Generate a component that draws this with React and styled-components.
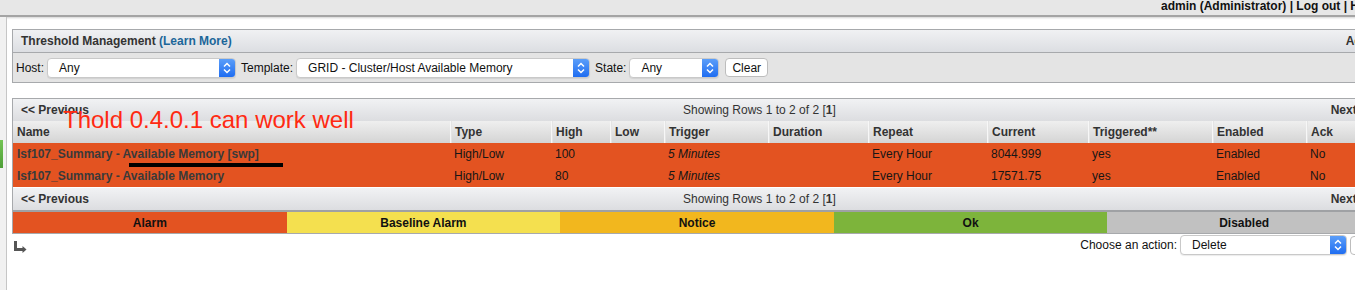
import React from "react";
import styled, { createGlobalStyle } from "styled-components";

const GlobalStyle = createGlobalStyle`
    html, body {
        margin: 0;
        padding: 0;
        overflow: hidden;
        background: #ffffff;
    }
    body {
        font-family: "Liberation Sans", Arial, Helvetica, sans-serif;
        font-size: 12px;
        color: #1a1a1a;
    }
`;

const COLS = "437px 101px 59px 54px 104px 100px 119px 101px 124px 94px 75px";

const Page = styled.div`
    width: 1400px;
    height: 100vh;
    display: flex;
    flex-direction: column;
`;

const TopBar = styled.div`
    height: 15px;
    background: #e7e7e7;
    border-bottom: 2px solid #a4a4a4;
    box-shadow: 0 1px 2px rgba(0, 0, 0, 0.18);
    display: flex;
    align-items: flex-start;
    padding-left: 1161px;
    font-weight: bold;
    line-height: 13px;
    color: #111;
    white-space: nowrap;
`;

const Body = styled.div`
    flex: 1;
    display: flex;
`;

const Sidebar = styled.div`
    width: 6px;
    background: #f1f1f1;
    border-right: 1px solid #c6c6c6;
`;

const GreenTab = styled.div`
    margin-top: 123px;
    width: 3px;
    height: 28px;
    background: linear-gradient(180deg, #74c454 0%, #4f9f38 100%);
`;

const Main = styled.div`
    padding: 12px 0 0 5px;
    display: flex;
    flex-direction: column;
`;

const Panel = styled.div`
    position: relative;
    width: 1368px;
    border: 1px solid #a7a9ac;
    margin-bottom: ${({ $gap }) => $gap || 0}px;
`;

const PanelHeader = styled.div`
    height: 22px;
    display: flex;
    align-items: center;
    justify-content: space-between;
    padding: 0 12px 0 8px;
    background: linear-gradient(180deg, #f0f1f3 0%, #dcdee2 100%);
    border-bottom: 1px solid #a7a9ac;
    font-weight: bold;
    color: #333;
`;

const LearnMore = styled.span`
    color: #1c6699;
`;

const FilterRow = styled.div`
    height: 29px;
    display: flex;
    align-items: center;
    gap: 3px;
    padding-left: 3px;
    background: #e4e4e4;
    color: #111;
`;

const Label = styled.span`
    margin-left: ${({ $ml }) => $ml || 0}px;
`;

const SelectBox = styled.div`
    width: ${({ $w }) => $w}px;
    height: 20px;
    box-sizing: border-box;
    display: flex;
    align-items: stretch;
    background: #ffffff;
    border: 1px solid #c9c9c9;
    border-radius: 4px;
    box-shadow: 0 1px 1px rgba(0, 0, 0, 0.08);
    overflow: hidden;
`;

const SelectText = styled.span`
    flex: 1;
    display: flex;
    align-items: center;
    padding-left: 11px;
    color: #111;
    white-space: nowrap;
`;

const SelectArrow = styled.span`
    width: 16px;
    display: flex;
    align-items: center;
    justify-content: center;
    background: linear-gradient(180deg, #5b9ef9 0%, #1f6df1 100%);
`;

const Button = styled.div`
    height: 19px;
    box-sizing: border-box;
    display: flex;
    align-items: center;
    padding: 0 6px;
    margin-left: ${({ $ml }) => $ml || 0}px;
    background: #ffffff;
    border: 1px solid #bdbdbd;
    border-radius: 4px;
    color: #111;
    width: ${({ $w }) => ($w ? `${$w}px` : "auto")};
`;

const NavRow = styled.div`
    height: 22px;
    display: grid;
    grid-template-columns: 670px auto 1fr;
    align-items: center;
    background: linear-gradient(180deg, #f1f2f4 0%, #dcdde0 100%);
    color: #333;
`;

const NavLink = styled.span`
    font-weight: bold;
    padding: 0 ${({ $right }) => ($right ? "7px" : "0")} 0
        ${({ $right }) => ($right ? "0" : "8px")};
    text-align: ${({ $right }) => ($right ? "right" : "left")};
`;

const NavCenter = styled.span`
    color: #333;
`;

const GridRow = styled.div`
    display: grid;
    grid-template-columns: ${COLS};
    height: 22px;
    align-items: stretch;
    background: ${({ $bg }) => $bg};
`;

const HeadRow = styled(GridRow)`
    background: linear-gradient(180deg, #efefef 0%, #d4d4d4 100%);
`;

const HeadCell = styled.div`
    display: flex;
    align-items: center;
    padding: 0 4px;
    font-weight: bold;
    color: #333;
    border-left: ${({ $first }) => ($first ? "none" : "1px solid #f7f7f7")};
    box-shadow: ${({ $first }) => ($first ? "none" : "inset 1px 0 0 #e4e4e4")};
`;

const Cell = styled.div`
    display: flex;
    align-items: center;
    padding: 0 4px;
    white-space: nowrap;
    font-weight: ${({ $bold }) => ($bold ? "bold" : "normal")};
    font-style: ${({ $italic }) => ($italic ? "italic" : "normal")};
    color: ${({ $bold }) => ($bold ? "#3a3a3a" : "#161616")};
`;

const BottomNav = styled.div`
    padding-top: 1px;
`;

const Legend = styled.div`
    display: grid;
    grid-template-columns: repeat(5, 1fr);
    height: 21px;
    border-top: 2px solid #9fa1a4;
`;

const LegendCell = styled.div`
    display: flex;
    align-items: center;
    justify-content: center;
    font-weight: bold;
    color: #111;
    background: ${({ $bg }) => $bg};
`;

const Note = styled.div`
    position: absolute;
    left: 50px;
    top: 9px;
    font-size: 24px;
    line-height: 24px;
    color: #ff2a12;
    white-space: nowrap;
    pointer-events: none;
`;

const Underline = styled.div`
    position: absolute;
    left: 116px;
    top: 64px;
    width: 154px;
    height: 4px;
    background: #000;
`;

const ActionRow = styled.div`
    width: 1370px;
    display: flex;
    justify-content: space-between;
    align-items: flex-start;
    padding-top: 1px;
`;

const CornerArrow = styled.svg`
    margin: 6px 0 0 2px;
`;

const ActionGroup = styled.div`
    display: flex;
    align-items: center;
    gap: 3px;
    color: #111;
`;

const Chevrons = () => (
    <svg width="10" height="14" viewBox="0 0 10 14">
        <path d="M2 5.5 L5 2.5 L8 5.5" fill="none" stroke="#fff" strokeWidth="1.5" />
        <path d="M2 8.5 L5 11.5 L8 8.5" fill="none" stroke="#fff" strokeWidth="1.5" />
    </svg>
);

const Select = ({ width, value }) => (
    <SelectBox $w={width}>
        <SelectText>{value}</SelectText>
        <SelectArrow>
            <Chevrons />
        </SelectArrow>
    </SelectBox>
);

const columns = [
    { key: "name", label: "Name" },
    { key: "type", label: "Type" },
    { key: "high", label: "High" },
    { key: "low", label: "Low" },
    { key: "trigger", label: "Trigger" },
    { key: "duration", label: "Duration" },
    { key: "repeat", label: "Repeat" },
    { key: "current", label: "Current" },
    { key: "triggered", label: "Triggered**" },
    { key: "enabled", label: "Enabled" },
    { key: "ack", label: "Ack" },
];

const rows = [
    {
        name: "lsf107_Summary - Available Memory [swp]",
        type: "High/Low",
        high: "100",
        low: "",
        trigger: "5 Minutes",
        duration: "",
        repeat: "Every Hour",
        current: "8044.999",
        triggered: "yes",
        enabled: "Enabled",
        ack: "No",
    },
    {
        name: "lsf107_Summary - Available Memory",
        type: "High/Low",
        high: "80",
        low: "",
        trigger: "5 Minutes",
        duration: "",
        repeat: "Every Hour",
        current: "17571.75",
        triggered: "yes",
        enabled: "Enabled",
        ack: "No",
    },
];

const legend = [
    { label: "Alarm", color: "#e35321" },
    { label: "Baseline Alarm", color: "#f4e04f" },
    { label: "Notice", color: "#f2b71e" },
    { label: "Ok", color: "#7db43b" },
    { label: "Disabled", color: "#c1c1c1" },
];

function Navigation() {
    return (
        <NavRow>
            <NavLink>&lt;&lt; Previous</NavLink>
            <NavCenter>
                Showing Rows 1 to 2 of 2 [<b>1</b>]
            </NavCenter>
            <NavLink $right>Next &gt;&gt;</NavLink>
        </NavRow>
    );
}

export default function App() {
    return (
        <>
            <GlobalStyle />
            <Page>
                <TopBar>admin (Administrator) | Log out | Help</TopBar>
                <Body>
                    <Sidebar>
                        <GreenTab />
                    </Sidebar>
                    <Main>
                        <Panel $gap={15}>
                            <PanelHeader>
                                <span>
                                    Threshold Management <LearnMore>(Learn More)</LearnMore>
                                </span>
                                <span>Add</span>
                            </PanelHeader>
                            <FilterRow>
                                <Label>Host:</Label>
                                <Select width={189} value="Any" />
                                <Label $ml={2}>Template:</Label>
                                <Select width={294} value="GRID - Cluster/Host Available Memory" />
                                <Label $ml={2}>State:</Label>
                                <Select width={90} value="Any" />
                                <Button $ml={3}>Clear</Button>
                            </FilterRow>
                        </Panel>

                        <Panel>
                            <Navigation />
                            <HeadRow>
                                {columns.map((c, i) => (
                                    <HeadCell key={c.key} $first={i === 0}>
                                        {c.label}
                                    </HeadCell>
                                ))}
                            </HeadRow>
                            {rows.map((r) => (
                                <GridRow key={r.name} $bg="#e35321">
                                    {columns.map((c) => (
                                        <Cell
                                            key={c.key}
                                            $bold={c.key === "name"}
                                            $italic={c.key === "trigger"}
                                        >
                                            {r[c.key]}
                                        </Cell>
                                    ))}
                                </GridRow>
                            ))}
                            <BottomNav>
                                <Navigation />
                            </BottomNav>
                            <Legend>
                                {legend.map((l) => (
                                    <LegendCell key={l.label} $bg={l.color}>
                                        {l.label}
                                    </LegendCell>
                                ))}
                            </Legend>
                            <Note>Thold 0.4.0.1 can work well</Note>
                            <Underline />
                        </Panel>

                        <ActionRow>
                            <CornerArrow width="13" height="12" viewBox="0 0 13 12">
                                <rect x="0" y="0" width="3" height="10" fill="#555" />
                                <rect x="0" y="7" width="9" height="3" fill="#555" />
                                <path d="M8.5 5 L12.5 8.5 L8.5 12 Z" fill="#555" />
                            </CornerArrow>
                            <ActionGroup>
                                <span>Choose an action:</span>
                                <Select width={167} value="Delete" />
                                <Button $w={32}>Go</Button>
                            </ActionGroup>
                        </ActionRow>
                    </Main>
                </Body>
            </Page>
        </>
    );
}
